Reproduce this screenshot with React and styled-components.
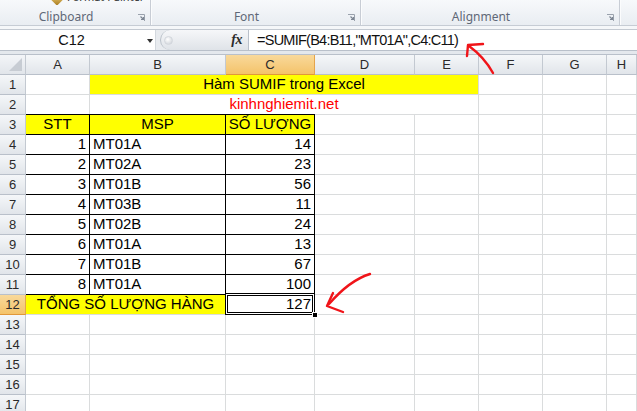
import React from "react";
import styled, { createGlobalStyle, css } from "styled-components";

const GlobalStyle = createGlobalStyle`
  html, body {
    margin: 0;
    padding: 0;
    background: #fff;
    overflow: hidden;
  }
  * {
    box-sizing: border-box;
  }
`;

const YELLOW = "#ffff00";
const GRID = "#dadcdd";
const HEAD_LINE = "#b9c0ca";

const Page = styled.div`
  position: relative;
  width: 637px;
  height: 411px;
  overflow: hidden;
  font-family: "Liberation Sans", Arial, sans-serif;
`;

/* ---------- ribbon ---------- */

const Ribbon = styled.div`
  display: flex;
  height: 26px;
  background: linear-gradient(#f7f9fb, #e9edf2);
  border-bottom: 1px solid #c6ccd4;
`;

const Group = styled.div`
  width: ${(p) => p.$width}px;
  flex: ${(p) => (p.$grow ? 1 : "none")};
  display: flex;
  flex-direction: column;
  justify-content: space-between;
  border-right: ${(p) => (p.$grow ? "none" : "1px solid #c8cdd5")};
  box-shadow: ${(p) => (p.$grow ? "none" : "1px 0 0 #fbfcfd")};
`;

const TopSnippet = styled.div`
  height: 5px;
  overflow: hidden;
  display: flex;
  align-items: flex-start;
  gap: 6px;
  padding-left: 53px;
`;

const Brush = styled.span`
  width: 8px;
  height: 8px;
  margin-top: -4px;
  background: linear-gradient(135deg, #f2d27a, #a77a1e);
  transform: rotate(45deg);
`;

const SnippetText = styled.span`
  margin-top: -10px;
  font: 11px/14px "Noto Sans", "Open Sans", sans-serif;
  color: #333;
`;

const GroupFoot = styled.div`
  display: flex;
  align-items: center;
  height: 16px;
  margin-bottom: 0;
`;

const GroupLabel = styled.span`
  flex: 1;
  text-align: center;
  font: 12px/16px "Noto Sans", "Open Sans", sans-serif;
  color: #5f6877;
`;

const Launcher = styled.svg`
  width: 18px;
  height: 9px;
  flex: none;
`;

const Gap = styled.div`
  height: ${(p) => p.$h}px;
  background: ${(p) => p.$bg};
`;

/* ---------- formula bar ---------- */

const FormulaBar = styled.div`
  display: flex;
  height: 22px;
  border-top: 1px solid #c3c9d1;
  border-bottom: 1px solid ${HEAD_LINE};
  background: #e8ebef;
`;

const NameBox = styled.div`
  position: relative;
  width: 156px;
  flex: none;
  background: #fff;
  border-right: 1px solid #d3d8de;
  display: flex;
  align-items: center;
  justify-content: center;
  padding-right: 12px;
  font: 14.5px/20px "Liberation Sans", Arial, sans-serif;
  color: #111;
`;

const DropArrow = styled.span`
  position: absolute;
  right: 2px;
  top: 9px;
  border-left: 3.5px solid transparent;
  border-right: 3.5px solid transparent;
  border-top: 4px solid #333;
`;

const Splitter = styled.div`
  width: 88px;
  flex: none;
  display: flex;
  align-items: center;
  justify-content: space-between;
  margin-left: 4px;
  padding-right: 6px;
  border-left: 1px solid #b9c0c9;
  border-radius: 11px 0 0 11px;
  background: linear-gradient(#f6f7f9, #dfe3e8);
`;

const Knob = styled.span`
  width: 9px;
  height: 9px;
  margin-left: 3px;
  border-radius: 50%;
  background: radial-gradient(circle at 40% 35%, #ffffff, #c9ced5);
  border: 1px solid #d3d7dd;
`;

const Fx = styled.span`
  font: italic bold 14px/20px "Liberation Serif", "Times New Roman", serif;
  color: #2b2b2b;
  letter-spacing: -0.5px;
`;

const FormulaInput = styled.div`
  flex: 1;
  background: #fff;
  border-left: 1px solid ${HEAD_LINE};
  padding-left: 8px;
  font: 14.5px/20px "Liberation Sans", Arial, sans-serif;
  letter-spacing: -0.75px;
  color: #111;
  white-space: nowrap;
`;

/* ---------- sheet ---------- */

const Sheet = styled.div`
  display: grid;
  grid-template-columns: 26px 64px 136px 89px 100px 64px 64px 64px 1fr;
  grid-auto-rows: 20px;
  border-top: 1px solid ${HEAD_LINE};
`;

const Corner = styled.div`
  background: linear-gradient(#f3f5f8, #e1e5ea);
  border-right: 1px solid #c3c9d1;
  border-bottom: 1px solid ${HEAD_LINE};
  display: flex;
  align-items: flex-end;
  justify-content: flex-end;
  padding: 0 3px 3px 0;
`;

const CornerTri = styled.span`
  width: 0;
  height: 0;
  border-left: 13px solid transparent;
  border-bottom: 13px solid #c7ccd3;
`;

const Head = styled.div`
  display: flex;
  align-items: center;
  justify-content: center;
  font: 13px/18px "Liberation Sans", Arial, sans-serif;
  color: #2a2a2a;
  background: ${(p) =>
    p.$active
      ? "linear-gradient(#f9d99b, #f4c36a)"
      : "linear-gradient(#f5f7f9, #e1e5ea)"};
  border-right: 1px solid ${(p) => (p.$active ? "#e4a44c" : "#c3c9d1")};
  border-bottom: 1px solid ${(p) => (p.$active ? "#e0973a" : HEAD_LINE)};
`;

const Cell = styled.div`
  position: relative;
  grid-column: span ${(p) => p.$span || 1};
  display: flex;
  align-items: flex-end;
  justify-content: ${(p) =>
    p.$align === "right" ? "flex-end" : p.$align === "center" ? "center" : "flex-start"};
  padding: 0 3px 1px;
  background: ${(p) => p.$bg || "#fff"};
  border-right: 1px solid ${(p) => (p.$boxed ? "#000" : GRID)};
  border-bottom: 1px solid ${(p) => (p.$boxed ? "#000" : GRID)};
  ${(p) =>
    p.$boxed &&
    css`
      box-shadow: 0 -1px 0 #000;
    `}
  font: 15px/18px "Liberation Sans", Arial, sans-serif;
  color: ${(p) => p.$color || "#000"};
  white-space: nowrap;
`;

const Selection = styled.span`
  position: absolute;
  left: -1px;
  top: -2px;
  right: -1px;
  bottom: -1px;
  border: 1px solid #000;
  box-shadow: inset 0 0 0 1px #fff, inset 0 0 0 2px #000;
  z-index: 2;
`;

const FillHandle = styled.span`
  position: absolute;
  right: -4px;
  bottom: -4px;
  width: 6px;
  height: 6px;
  background: #000;
  border: 1px solid #fff;
  z-index: 3;
`;

const Marks = styled.svg`
  position: absolute;
  left: 0;
  top: 0;
  pointer-events: none;
  z-index: 5;
`;

/* ---------- data ---------- */

const columns = ["A", "B", "C", "D", "E", "F", "G", "H"];

const items = [
  [1, "MT01A", 14],
  [2, "MT02A", 23],
  [3, "MT01B", 56],
  [4, "MT03B", 11],
  [5, "MT02B", 24],
  [6, "MT01A", 13],
  [7, "MT01B", 67],
  [8, "MT01A", 100],
];

const blanks = (n) => Array.from({ length: n }, () => ({}));

const rows = [
  [{}, { span: 4, bg: YELLOW, text: "Hàm SUMIF trong Excel", align: "center" }, ...blanks(3)],
  [{}, { span: 4, text: "kinhnghiemit.net", align: "center", color: "#ff0000" }, ...blanks(3)],
  [
    { boxed: true, bg: YELLOW, text: "STT", align: "center" },
    { boxed: true, bg: YELLOW, text: "MSP", align: "center" },
    { boxed: true, bg: YELLOW, text: "SỐ LƯỢNG", align: "center" },
    ...blanks(5),
  ],
  ...items.map(([n, code, qty]) => [
    { boxed: true, text: n, align: "right" },
    { boxed: true, text: code },
    { boxed: true, text: qty, align: "right" },
    ...blanks(5),
  ]),
  [
    { span: 2, bg: YELLOW, text: "TỔNG SỐ LƯỢNG HÀNG", align: "center" },
    { boxed: true, text: 127, align: "right", selected: true },
    ...blanks(5),
  ],
  ...Array.from({ length: 6 }, () => blanks(8)),
];

const groups = [
  { label: "Clipboard", width: 151, snippet: true },
  { label: "Font", width: 210 },
  { label: "Alignment", width: 259 },
  { grow: true },
];

const LauncherIcon = () => (
  <Launcher viewBox="0 0 18 9">
    <path d="M6 1.5 H12.5 V8" fill="none" stroke="#9aa2ad" strokeWidth="1" />
    <path d="M8.5 3.5 L11.5 6.5 M11.5 4 V6.5 H9" fill="none" stroke="#7d8693" strokeWidth="1.2" />
  </Launcher>
);

export default function App() {
  return (
    <Page>
      <GlobalStyle />
      <Ribbon>
        {groups.map((g, i) => (
          <Group key={i} $width={g.width} $grow={g.grow}>
            <TopSnippet>
              {g.snippet && (
                <>
                  <Brush />
                  <SnippetText>Format Painter</SnippetText>
                </>
              )}
            </TopSnippet>
            {g.label && (
              <GroupFoot>
                <GroupLabel>{g.label}</GroupLabel>
                <LauncherIcon />
              </GroupFoot>
            )}
          </Group>
        ))}
      </Ribbon>
      <Gap $h={3} $bg="#f5f7f9" />
      <FormulaBar>
        <NameBox>
          C12
          <DropArrow />
        </NameBox>
        <Splitter>
          <Knob />
          <Fx>fx</Fx>
        </Splitter>
        <FormulaInput>=SUMIF(B4:B11,"MT01A",C4:C11)</FormulaInput>
      </FormulaBar>
      <Gap $h={3} $bg="#e4e8ed" />
      <Sheet>
        <Corner>
          <CornerTri />
        </Corner>
        {columns.map((c) => (
          <Head key={c} $active={c === "C"}>
            {c}
          </Head>
        ))}
        {rows.map((cells, r) => (
          <React.Fragment key={r}>
            <Head $active={r + 1 === 12}>{r + 1}</Head>
            {cells.map((cell, i) => (
              <Cell
                key={i}
                $span={cell.span}
                $bg={cell.bg}
                $align={cell.align}
                $color={cell.color}
                $boxed={cell.boxed}
              >
                {cell.text}
                {cell.selected && (
                  <>
                    <Selection />
                    <FillHandle />
                  </>
                )}
              </Cell>
            ))}
          </React.Fragment>
        ))}
      </Sheet>
      <Marks width="637" height="411" viewBox="0 0 637 411">
        <g fill="none" stroke="#f01419" strokeWidth="2.4" strokeLinecap="round" strokeLinejoin="round">
          <path d="M493 73 C488 64 480 54 469 46" />
          <path d="M467 56 L468 45 L483 44" />
          <path d="M370 274 C357 278 342 289 329 304" />
          <path d="M333 293 L327 306 L343 312" />
        </g>
      </Marks>
    </Page>
  );
}
